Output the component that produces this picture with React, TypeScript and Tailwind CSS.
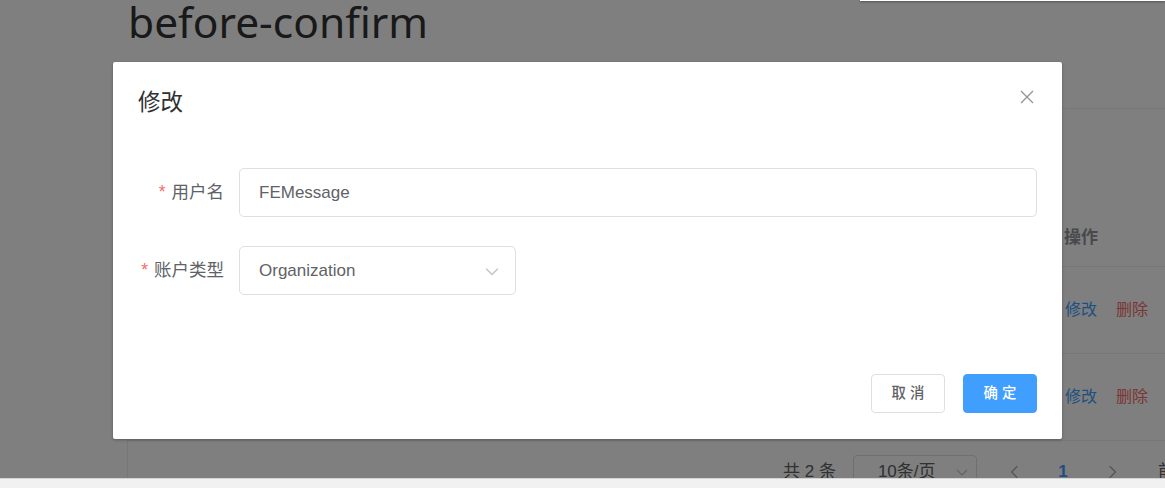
import React from "react";

const sans = { fontFamily: '"Liberation Sans", Arial, "Noto Sans CJK SC", sans-serif' };

function CloseIcon() {
  return (
    <svg width="14" height="14" viewBox="0 0 14 14" fill="none">
      <path d="M1 1 L13 13 M13 1 L1 13" stroke="#909399" strokeWidth="1.3" />
    </svg>
  );
}

function Chevron({ dir, color, size = 12 }: { dir: "down" | "left" | "right"; color: string; size?: number }) {
  const d =
    dir === "down"
      ? "M1 4 L6 9 L11 4"
      : dir === "left"
      ? "M8 1 L3 6 L8 11"
      : "M4 1 L9 6 L4 11";
  return (
    <svg width={size} height={size} viewBox="0 0 12 12" fill="none">
      <path d={d} stroke={color} strokeWidth="1.2" />
    </svg>
  );
}

export default function App() {
  return (
    <div className="relative w-[1165px] h-[488px] overflow-hidden bg-white" style={sans}>
      {/* page underneath */}
      <div className="w-[1165px]">
        <div
          className="pl-[128px] text-[42.5px] leading-[43px] text-[#333]"
          style={{ fontFamily: '"Noto Sans", "Open Sans", sans-serif' }}
        >
          before-confirm
        </div>
        <div className="ml-[127px] mt-[65px] w-[1200px] border-l border-t border-[#ebeef5]">
          <div className="h-[100px]" />
          <div className="flex h-[58px] border-b border-[#ebeef5] items-center">
            <div className="w-[924px]" />
            <div className="pl-[12px] text-[17px] font-bold text-[#909399]">操作</div>
          </div>
          {[0, 1].map((i) => (
            <div key={i} className="flex h-[87px] border-b border-[#ebeef5] items-center">
              <div className="w-[924px]" />
              <div className="pl-[13px] flex gap-[19px] text-[16px]">
                <span className="text-[#409eff]">修改</span>
                <span className="text-[#f56c6c]">删除</span>
              </div>
            </div>
          ))}
          <div className="flex items-center mt-[14px] h-[34px] text-[17px] text-[#606266]">
            <div className="w-[655px]" />
            <span>共 2 条</span>
            <div className="ml-[17px] w-[124px] h-[34px] border border-[#dcdfe6] rounded-[4px] flex items-center pl-[24px] pr-[8px] justify-between">
              <span>10条/页</span>
              <Chevron dir="down" color="#c0c4cc" />
            </div>
            <div className="ml-[20px] w-[36px] flex justify-center">
              <Chevron dir="left" color="#a8abb2" size={14} />
            </div>
            <div className="ml-[12px] w-[36px] text-center font-bold text-[#409eff]">1</div>
            <div className="ml-[13px] w-[36px] flex justify-center">
              <Chevron dir="right" color="#a8abb2" size={14} />
            </div>
            <span className="ml-[28px]">前往</span>
          </div>
        </div>
      </div>

      {/* overlay */}
      <div className="absolute inset-0 bg-black/50" />

      {/* top-right floating strip */}
      <div className="absolute top-0 left-[860px] right-0 h-[1px] bg-white shadow-[0_1px_2px_rgba(0,0,0,0.5)]" />

      {/* dialog */}
      <div className="absolute left-[113px] top-[62px] w-[949px] h-[377px] bg-white rounded-[2px] shadow-[0_1px_3px_rgba(0,0,0,0.3)] flex flex-col">
        <div className="pl-[25px] pt-[26px] h-[55px] text-[22.5px] leading-[29px] text-[#303133]">修改</div>
        <button className="absolute top-[28px] right-[28px] w-[14px] h-[14px]">
          <CloseIcon />
        </button>
        <div className="pt-[51px] px-[25px] flex flex-col gap-[29px]">
          <div className="flex items-center h-[49px]">
            <div className="w-[101px] pr-[15px] text-right text-[17.5px] text-[#606266] whitespace-nowrap">
              <span className="text-[#f56c6c] mr-[6px]">*</span>用户名
            </div>
            <div className="flex-1 h-[49px] border border-[#dcdfe6] rounded-[5px] flex items-center pl-[19px] text-[17px] text-[#606266]">
              FEMessage
            </div>
          </div>
          <div className="flex items-center h-[49px]">
            <div className="w-[101px] pr-[15px] text-right text-[17.5px] text-[#606266] whitespace-nowrap">
              <span className="text-[#f56c6c] mr-[6px]">*</span>账户类型
            </div>
            <div className="w-[277px] h-[49px] border border-[#dcdfe6] rounded-[5px] flex items-center justify-between pl-[19px] pr-[16px] text-[17px] text-[#606266]">
              <span>Organization</span>
              <Chevron dir="down" color="#c0c4cc" size={14} />
            </div>
          </div>
        </div>
        <div className="mt-auto flex justify-end gap-[18px] px-[25px] pb-[26px]">
          <button className="w-[74px] h-[39px] border border-[#dcdfe6] rounded-[4px] bg-white text-[14.4px] text-[#606266] font-medium">
            取 消
          </button>
          <button className="w-[74px] h-[39px] border border-[#409eff] rounded-[4px] bg-[#409eff] text-[14.4px] text-white font-medium">
            确 定
          </button>
        </div>
      </div>

      {/* bottom scrollbar strip */}
      <div className="absolute left-0 right-0 bottom-0 h-[10px] bg-[#f1f1f1] border-t border-[#d4d4d4]" />
    </div>
  );
}
